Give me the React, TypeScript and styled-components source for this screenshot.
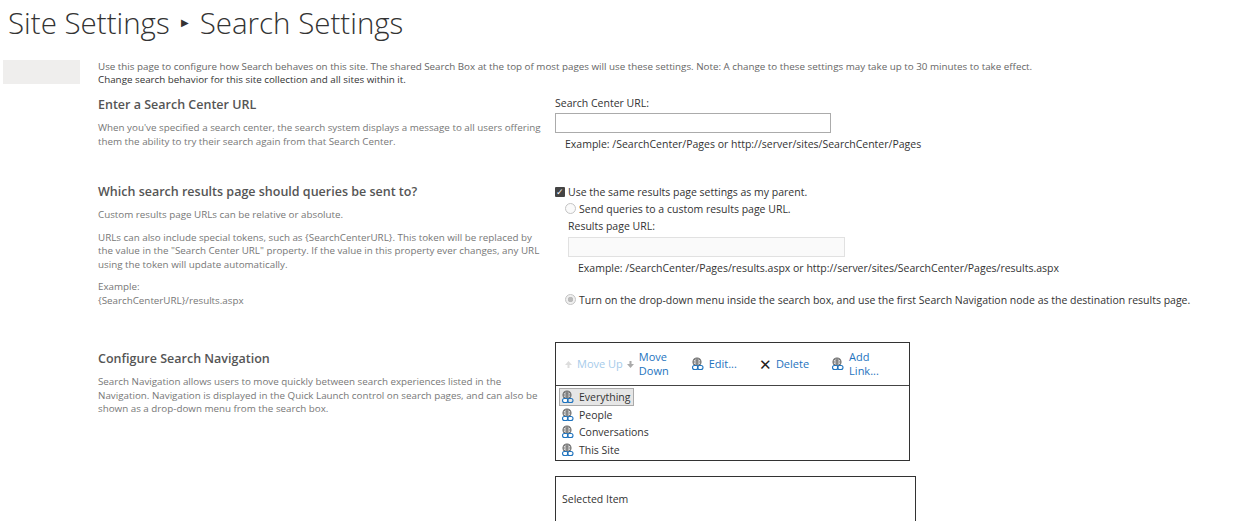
import styled, {createGlobalStyle} from "styled-components"

const Global = createGlobalStyle`
  body { margin: 0; background: #fff; font-family: "Open Sans", "Liberation Sans", sans-serif; color: #444; }
`

const Page = styled.div`
  padding: 2px 0 0 8px;
`

const Title = styled.h1`
  margin: 0;
  font-weight: 300;
  font-size: 29.5px;
  color: #333;
  display: flex;
  align-items: center;
  gap: 11px;
  height: 40px;
`

const Arrow = styled.span`
  font-size: 10px;
  color: #333;
`

const Body = styled.div`
  display: flex;
  margin-top: 18px;
`

const SideBox = styled.div`
  width: 77px;
  height: 24px;
  background: #efeeed;
  margin: 0 18px 0 -5px;
  flex-shrink: 0;
`

const Main = styled.div`
  flex: 1;
`

const Intro = styled.div`
  font-size: 9.8px;
  line-height: 13px;
  color: #666;
  span { color: #333; display: block; }
`

const Section = styled.div<{ $pad?: number }>`
  display: grid;
  grid-template-columns: 457px 1fr;
  padding-bottom: ${p => p.$pad ?? 0}px;
`

const Heading = styled.h2`
  margin: 10px 0 8px;
  font-size: 12.5px;
  font-weight: 600;
  color: #555;
`

const Desc = styled.p`
  margin: 0 0 9px;
  font-size: 9.8px;
  line-height: 13.5px;
  color: #777;
  width: 450px;
`

const Field = styled.div`
  font-size: 10.5px;
  color: #333;
  padding-top: 10px;
`

const TextBox = styled.div<{ $disabled?: boolean; $w: number }>`
  width: ${p => p.$w}px;
  height: 18px;
  border: 1px solid ${p => (p.$disabled ? "#e1e1e1" : "#ababab")};
  background: ${p => (p.$disabled ? "#fafafa" : "#fff")};
  margin: 3px 0 4px;
`

const Example = styled.div<{ $indent: number }>`
  padding-left: ${p => p.$indent}px;
  font-size: 10.5px;
  color: #333;
`

const Option = styled.label<{ $indent?: number }>`
  display: flex;
  align-items: center;
  gap: 3px;
  padding-left: ${p => p.$indent ?? 0}px;
  font-size: 10.5px;
  color: #333;
  height: 17px;
`

const Check = styled.span`
  width: 10px;
  height: 10px;
  background: #444;
  color: #fff;
  font-size: 9px;
  line-height: 10px;
  text-align: center;
  border-radius: 1px;
`

const Radio = styled.span<{ $on?: boolean }>`
  width: 9px;
  height: 9px;
  border-radius: 50%;
  border: 1px solid #c4c4c4;
  background: ${p => (p.$on ? "radial-gradient(#bbb 0 2.5px, #f0f0f0 3px)" : "#fafafa")};
`

const NavBox = styled.div`
  width: 353px;
  border: 1px solid #333;
  margin-top: 2px;
`

const Toolbar = styled.div`
  display: flex;
  align-items: center;
  height: 42px;
  padding-left: 8px;
  border-bottom: 1px solid #444;
  gap: 22px;
`

const Tool = styled.div<{ $disabled?: boolean }>`
  display: flex;
  align-items: center;
  gap: 4px;
  font-size: 11px;
  line-height: 14px;
  color: ${p => (p.$disabled ? "#a6cbea" : "#1e73be")};
`

const List = styled.div`
  padding: 2px 0 1px 4px;
`

const Item = styled.div<{ $sel?: boolean }>`
  display: flex;
  width: fit-content;
  align-items: center;
  gap: 4px;
  font-size: 10.5px;
  color: #333;
  height: 16px;
  padding: 0 2px 0 1px;
  margin: 1px 0 1.5px;
  background: ${p => (p.$sel ? "#e6e6e6" : "transparent")};
  outline: ${p => (p.$sel ? "1px solid #aaa" : "none")};
`

const IndentRow = styled.div`
  padding-left: 13px;
`

const SelBox = styled.div`
  width: 353px;
  height: 44px;
  border: 1px solid #333;
  border-bottom: none;
  margin-top: 15px;
  display: flex;
  align-items: center;
  padding-left: 6px;
  font-size: 10.5px;
  color: #333;
`

function LinkIcon() {
  return (
    <svg width="14" height="14" viewBox="0 0 14 14" fill="none" strokeWidth="1.1">
      <circle cx="6" cy="5" r="4" stroke="#666" />
      <path d="M2 5h8M6 1v8M3 2.5q3 1.5 6 0M3 7.5q3-1.5 6 0" stroke="#666" />
      <rect x="1.5" y="8.5" width="5.5" height="4" rx="2" stroke="#1e73be" fill="#fff" />
      <rect x="6.5" y="8.5" width="5.5" height="4" rx="2" stroke="#1e73be" fill="none" />
    </svg>
  )
}

function ArrowIcon({up, color}: { up?: boolean; color: string }) {
  return (
    <svg width="9" height="9" viewBox="0 0 9 9">
      <path d={up ? "M4.5 1L8 5H5.5v3h-2V5H1z" : "M4.5 8L8 4H5.5V1h-2v3H1z"} fill={color} />
    </svg>
  )
}

const links = ["Everything", "People", "Conversations", "This Site"]

export default function App() {
  return (
    <Page>
      <Global />
      <Title>
        Site Settings <Arrow>▶</Arrow> Search Settings
      </Title>
      <Body>
        <SideBox />
        <Main>
          <Intro>
            Use this page to configure how Search behaves on this site. The shared Search Box at the top of most pages will use these settings. Note: A change to these settings may take up to 30 minutes to take effect.
            <span>Change search behavior for this site collection and all sites within it.</span>
          </Intro>
          <Section $pad={20}>
            <div>
              <Heading>Enter a Search Center URL</Heading>
              <Desc>When you've specified a search center, the search system displays a message to all users offering them the ability to try their search again from that Search Center.</Desc>
            </div>
            <Field>
              Search Center URL:
              <TextBox $w={274} />
              <Example $indent={10}>Example: /SearchCenter/Pages or http://server/sites/SearchCenter/Pages</Example>
            </Field>
          </Section>
          <Section $pad={24}>
            <div>
              <Heading style={{marginTop: 6}}>Which search results page should queries be sent to?</Heading>
              <Desc>Custom results page URLs can be relative or absolute.</Desc>
              <Desc>URLs can also include special tokens, such as {"{SearchCenterURL}"}. This token will be replaced by the value in the "Search Center URL" property. If the value in this property ever changes, any URL using the token will update automatically.</Desc>
              <Desc>Example:<br />{"{SearchCenterURL}"}/results.aspx</Desc>
            </div>
            <Field style={{paddingTop: 6}}>
              <Option><Check>✓</Check>Use the same results page settings as my parent.</Option>
              <Option $indent={10}><Radio />Send queries to a custom results page URL.</Option>
              <Option $indent={13}>Results page URL:</Option>
              <IndentRow><TextBox $disabled $w={275} /></IndentRow>
              <Example $indent={23}>Example: /SearchCenter/Pages/results.aspx or http://server/sites/SearchCenter/Pages/results.aspx</Example>
              <Option $indent={10} style={{marginTop: 16}}><Radio $on />Turn on the drop-down menu inside the search box, and use the first Search Navigation node as the destination results page.</Option>
            </Field>
          </Section>
          <Section>
            <div>
              <Heading>Configure Search Navigation</Heading>
              <Desc>Search Navigation allows users to move quickly between search experiences listed in the Navigation. Navigation is displayed in the Quick Launch control on search pages, and can also be shown as a drop-down menu from the search box.</Desc>
            </div>
            <div>
              <NavBox>
                <Toolbar>
                  <Tool $disabled><ArrowIcon up color="#ddd" />Move Up</Tool>
                  <Tool style={{marginLeft: -19}}><ArrowIcon color="#aaa" /><span>Move<br />Down</span></Tool>
                  <Tool><LinkIcon />Edit...</Tool>
                  <Tool><span style={{color: "#222", fontSize: 15}}>✕</span>Delete</Tool>
                  <Tool><LinkIcon /><span>Add<br />Link...</span></Tool>
                </Toolbar>
                <List>
                  {links.map((l, i) => (
                    <Item key={l} $sel={i === 0}><LinkIcon />{l}</Item>
                  ))}
                </List>
              </NavBox>
              <SelBox>Selected Item</SelBox>
            </div>
          </Section>
        </Main>
      </Body>
    </Page>
  )
}
